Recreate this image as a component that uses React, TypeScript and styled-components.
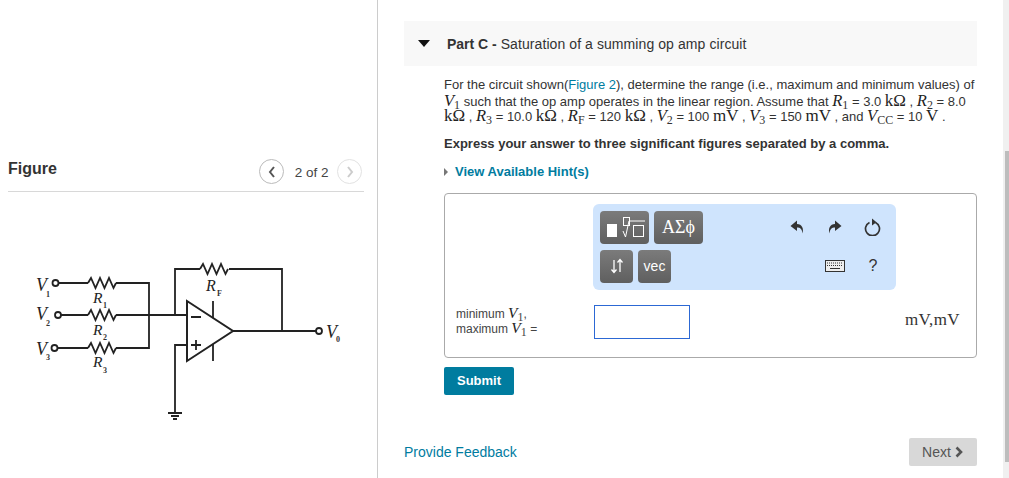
import React from "react";
import styled, { createGlobalStyle } from "styled-components";

const Global = createGlobalStyle`
  html, body { margin: 0; padding: 0; background: #fff; overflow: hidden; }
  body { font-family: "Liberation Sans", Arial, sans-serif; color: #333; }
`;

const Page = styled.div`
  width: 1009px;
  height: 478px;
  display: flex;
  overflow: hidden;
`;

const FigurePanel = styled.section`
  width: 378px;
  height: 478px;
  box-sizing: border-box;
  border-right: 1px solid #ccc;
  padding: 157px 13px 0 8px;
  flex: none;
`;

const FigureHeader = styled.header`
  height: 34px;
  border-bottom: 1px solid #d8d8d8;
  display: flex;
  justify-content: space-between;
  align-items: flex-start;
`;

const FigureTitle = styled.h2`
  margin: 2px 0 0;
  font-size: 16px;
  line-height: 20px;
  font-weight: 700;
  color: #333;
`;

const Pager = styled.div`
  display: flex;
  align-items: center;
  gap: 9.5px;
  margin: 2px 2px 0 0;
  font-size: 13.5px;
  color: #444;
`;

const PageCount = styled.span`
  margin: 2px -1px 0 1px;
`;

const PageButton = styled.span<{ $off?: boolean }>`
  width: 25px;
  height: 25px;
  box-sizing: border-box;
  border-radius: 50%;
  border: 1px solid ${(p) => (p.$off ? "#e2e2e2" : "#bbb")};
  display: flex;
  align-items: center;
  justify-content: center;
`;

const Diagram = styled.svg`
  display: block;
  width: 369px;
  height: 286px;
  margin-left: -8px;
`;

const Main = styled.main`
  flex: 1;
  min-width: 0;
  box-sizing: border-box;
  padding: 21px 32px 0 26px;
  display: flex;
  flex-direction: column;
`;

const PartBar = styled.div`
  height: 45px;
  background: #f8f8f8;
  display: flex;
  align-items: center;
  font-size: 14px;
  letter-spacing: 0.08px;
  color: #333;
`;

const Caret = styled.span`
  width: 0;
  height: 0;
  border-left: 6px solid transparent;
  border-right: 6px solid transparent;
  border-top: 7px solid #111;
  margin: 0 17px 0 14px;
`;

const PartLabel = styled.strong`
  font-weight: 700;
  white-space: pre;
  letter-spacing: 0;
`;

const Body = styled.div`
  padding: 11px 0 0 40px;
  font-size: 13px;
  color: #333;
`;

const AnswerBody = styled.div`
  padding-left: 40px;
  font-size: 13px;
  color: #333;
`;

const Paragraph = styled.p`
  margin: 0;
  width: 540px;
  line-height: 15px;
  white-space: nowrap;
`;

const Line = styled.span`
  display: block;
  height: 15.5px;
`;

const Mi = styled.span`
  font-family: "Liberation Serif", "Times New Roman", serif;
  font-size: 17px;
  color: #222;
`;

const Var = styled(Mi)`
  font-size: 16.5px;
  font-style: italic;
`;

const Sub = styled.span`
  font-family: "Liberation Serif", serif;
  font-size: 12px;
  font-style: normal;
  vertical-align: -3px;
  line-height: 0;
`;

const Link = styled.a`
  color: #007c9f;
`;

const Instruction = styled.p`
  margin: 11px 0 0;
  font-size: 13px;
  line-height: 18px;
  font-weight: 700;
`;

const Hint = styled.div`
  margin-top: 10px;
  height: 18px;
  display: flex;
  align-items: center;
  gap: 7px;
  font-size: 13px;
  font-weight: 700;
  color: #007c9f;
`;

const HintCaret = styled.span`
  width: 0;
  height: 0;
  border-top: 4px solid transparent;
  border-bottom: 4px solid transparent;
  border-left: 4px solid #777;
`;

const AnswerCard = styled.div`
  margin-top: 12px;
  height: 165px;
  box-sizing: border-box;
  border: 1px solid #aaa;
  border-radius: 4px;
  display: flex;
  flex-direction: column;
`;

const Toolbar = styled.div`
  margin: 10px 0 0 148px;
  width: 303px;
  height: 86px;
  box-sizing: border-box;
  background: #cfe4fd;
  border-radius: 6px;
  padding: 7px 14px 7px 7px;
  display: grid;
  grid-template-columns: auto 1fr auto;
  grid-template-rows: 33px 33px;
  row-gap: 6px;
`;

const ToolGroup = styled.div`
  display: flex;
  gap: 5px;
  align-items: flex-start;
`;

const ToolButton = styled.div<{ $w: number }>`
  width: ${(p) => p.$w}px;
  height: 33px;
  border-radius: 4px;
  background: linear-gradient(#7b7b7b, #5f5f5f);
  color: #fff;
  display: flex;
  align-items: center;
  justify-content: center;
  font-size: 14px;
`;

const GreekLabel = styled.span`
  font-family: "Liberation Serif", serif;
  font-size: 18px;
`;

const Actions = styled.div`
  grid-column: 3;
  display: flex;
  align-items: center;
  gap: 20px;
  color: #333;
`;

const SecondActions = styled(Actions)`
  grid-row: 2;
  gap: 21px;
  padding-right: 2px;
  justify-content: flex-end;
`;

const Help = styled.span`
  font-size: 16px;
  color: #333;
  width: 14px;
  text-align: center;
`;

const Row = styled.div`
  margin-top: 15px;
  display: flex;
  align-items: center;
  padding: 0 16px 0 11px;
`;

const InputLabel = styled.div`
  width: 138px;
  font-size: 12px;
  line-height: 15px;
  color: #444;
  margin-top: 1px;
`;

const LabelVar = styled(Var)`
  font-size: 15.5px;
  line-height: 0;
`;

const Answer = styled.div`
  width: 96px;
  height: 34px;
  box-sizing: border-box;
  border: 1px solid #2c68d4;
  background: #fff;
`;

const Units = styled.div`
  margin: -4px 0 0 auto;
  font-family: "Liberation Serif", serif;
  font-size: 17px;
  letter-spacing: 0.4px;
  color: #333;
`;

const Submit = styled.button`
  display: block;
  margin-top: 9px;
  width: 70px;
  height: 28px;
  border: none;
  border-radius: 2px;
  background: #007c9f;
  color: #fff;
  font: 700 13px "Liberation Sans", Arial, sans-serif;
  padding: 0;
`;

const Footer = styled.div`
  margin-top: 43px;
  display: flex;
  align-items: center;
  justify-content: space-between;
  font-size: 14px;
`;

const Next = styled.div`
  width: 68px;
  height: 28px;
  box-sizing: border-box;
  border-radius: 2px;
  background: #d8d8d8;
  color: #555;
  display: flex;
  align-items: center;
  justify-content: center;
  gap: 3px;
`;

const Scrollbar = styled.div`
  width: 6px;
  height: 478px;
  flex: none;
  margin-left: -6px;
  background: #f0f0f0;
  padding: 151px 0 0 2px;
  box-sizing: border-box;
`;

const Thumb = styled.div`
  height: 311px;
  background: #bdbdbd;
`;

const Chevron = ({ d, c, w = 2 }: { d: string; c: string; w?: number }) => (
  <svg width="10" height="14" viewBox="0 0 10 14">
    <path d={d} fill="none" stroke={c} strokeWidth={w} />
  </svg>
);

const zig = (x: number, y: number) =>
  `M${x} ${y}l3 -5l4.5 10l4.5 -10l4.5 10l4.5 -10l4.5 10l2.5 -5`;

const T = ({ x, y, s = 18, b }: { x: number; y: number; s?: number; b: string }) => (
  <text x={x} y={y} fontSize={s} fontFamily="'Liberation Serif', serif" fontStyle="italic" fill="#222">
    {b}
  </text>
);
const Ts = ({ x, y, b }: { x: number; y: number; b: string }) => (
  <text x={x} y={y} fontSize={8} fontFamily="'Liberation Serif', serif" fontWeight="700" fill="#333">
    {b}
  </text>
);

export default function App() {
  return (
    <Page>
      <Global />
      <FigurePanel>
        <FigureHeader>
          <FigureTitle>Figure</FigureTitle>
          <Pager>
            <PageButton>
              <Chevron d="M7 2L3 7l4 5" c="#555" />
            </PageButton>
            <PageCount>2 of 2</PageCount>
            <PageButton $off>
              <Chevron d="M3 2l4 5l-4 5" c="#ccc" />
            </PageButton>
          </Pager>
        </FigureHeader>
        {/* viewBox starts at page coordinates x=0, y=192 */}
        <Diagram viewBox="0 192 369 286">
          <g fill="none" stroke="#222" strokeWidth="1.8">
            <circle cx="55.5" cy="283" r="3" />
            <circle cx="58" cy="315" r="3" />
            <circle cx="54.5" cy="348" r="3" />
            <circle cx="319" cy="331" r="3" />
            <path d="M59 283H88M116 283H149V348H116M88 348H58" />
            <path d="M61 315H88M116 315H187M175 315V269H200M229 269H282V331" />
            <path d="M233 331H316M187 345H175V412" />
            <path d={zig(88, 283)} />
            <path d={zig(88, 315)} />
            <path d={zig(88, 348)} />
            <path d={zig(200, 269)} />
            <path d="M187 301V361L233 331Z" strokeWidth="2" />
            <path d="M213 301V318M213 344V361" />
            <path d="M191 317H201M191 345H201M196 340V350" />
            <path d="M168 413H182M171 416H179M173 419H177" />
          </g>
          <T x={36} y={291} b="V" />
          <Ts x={46} y={297} b="1" />
          <T x={36} y={320} b="V" />
          <Ts x={46} y={326} b="2" />
          <T x={36} y={355} b="V" />
          <Ts x={46} y={360} b="3" />
          <T x={326} y={338} b="V" />
          <Ts x={336} y={342} b="0" />
          <T x={93} y={303} s={15.5} b="R" />
          <Ts x={103} y={308} b="1" />
          <T x={93} y={335} s={15.5} b="R" />
          <Ts x={103} y={340} b="2" />
          <T x={93} y={367} s={15.5} b="R" />
          <Ts x={103} y={373} b="3" />
          <T x={206} y={291} s={16} b="R" />
          <Ts x={217} y={296} b="F" />
        </Diagram>
      </FigurePanel>
      <Main>
        <PartBar>
          <Caret />
          <PartLabel>Part C - </PartLabel>
          Saturation of a summing op amp circuit
        </PartBar>
        <Body>
          <Paragraph>
            <Line>
              For the circuit shown(<Link>Figure 2</Link>), determine the range (i.e., maximum and minimum values) of
            </Line>
            <Line>
              <Var>V</Var>
              <Sub>1</Sub> such that the op amp operates in the linear region. Assume that <Var>R</Var>
              <Sub>1</Sub> = 3.0 <Mi>kΩ</Mi> , <Var>R</Var>
              <Sub>2</Sub> = 8.0
            </Line>
            <Line>
              <Mi>kΩ</Mi> , <Var>R</Var>
              <Sub>3</Sub> = 10.0 <Mi>kΩ</Mi> , <Var>R</Var>
              <Sub>F</Sub> = 120 <Mi>kΩ</Mi> , <Var>V</Var>
              <Sub>2</Sub> = 100 <Mi>mV</Mi> , <Var>V</Var>
              <Sub>3</Sub> = 150 <Mi>mV</Mi> , and <Var>V</Var>
              <Sub>CC</Sub> = 10 <Mi>V</Mi> .
            </Line>
          </Paragraph>
          <Instruction>Express your answer to three significant figures separated by a comma.</Instruction>
          <Hint>
            <HintCaret />
            View Available Hint(s)
          </Hint>
        </Body>
        <AnswerBody>
          <AnswerCard>
            <Toolbar>
              <ToolGroup>
                <ToolButton $w={49}>
                  <svg width="49" height="33" viewBox="0 0 49 33">
                    <rect x="7" y="13" width="10" height="13" fill="#fff" />
                    <rect x="23.5" y="6.5" width="6" height="8" fill="none" stroke="#fff" />
                    <path d="M23 20l2.5 6l3.5 -16h16" fill="none" stroke="#fff" />
                    <rect x="33.5" y="14.5" width="10" height="11" fill="none" stroke="#fff" />
                  </svg>
                </ToolButton>
                <ToolButton $w={49}>
                  <GreekLabel>ΑΣϕ</GreekLabel>
                </ToolButton>
              </ToolGroup>
              <Actions>
                <svg width="18" height="18" viewBox="0 0 18 18">
                  <path d="M9 2.5L2.5 8L9 13V9.5C12 9.5 14 10.5 14.5 15.5C16 10.5 14 6 9 6Z" fill="#333" />
                </svg>
                <svg width="18" height="18" viewBox="0 0 18 18">
                  <path d="M9 2.5L15.5 8L9 13V9.5C6 9.5 4 10.5 3.5 15.5C2 10.5 4 6 9 6Z" fill="#333" />
                </svg>
                <svg width="18" height="18" viewBox="0 0 18 18">
                  <path d="M11.5 4.4A7 7 0 1 1 5.5 4.4" fill="none" stroke="#333" strokeWidth="1.7" />
                  <path d="M8 0.5L12.5 4.3L8 7.5Z" fill="#333" />
                </svg>
              </Actions>
              <ToolGroup>
                <ToolButton $w={33}>
                  <svg width="16" height="16" viewBox="0 0 16 16">
                    <path d="M5 2V14M2.5 11.5L5 14.5L7.5 11.5M11 14V2M8.5 4.5L11 1.5L13.5 4.5" fill="none" stroke="#fff" strokeWidth="1.3" />
                  </svg>
                </ToolButton>
                <ToolButton $w={33}>vec</ToolButton>
              </ToolGroup>
              <SecondActions>
                <svg width="20" height="12" viewBox="0 0 20 12">
                  <rect x="0.5" y="0.5" width="19" height="11" fill="#eee" stroke="#333" />
                  <path d="M2 3H18M2 5.5H18" stroke="#333" strokeDasharray="1 1" />
                  <path d="M5 8.5H15" stroke="#333" />
                </svg>
                <Help>?</Help>
              </SecondActions>
            </Toolbar>
            <Row>
              <InputLabel>
                minimum <LabelVar>V</LabelVar>
                <Sub>1</Sub>,
                <br />
                maximum <LabelVar>V</LabelVar>
                <Sub>1</Sub> =
              </InputLabel>
              <Answer />
              <Units>mV,mV</Units>
            </Row>
          </AnswerCard>
          <Submit>Submit</Submit>
        </AnswerBody>
        <Footer>
          <Link>Provide Feedback</Link>
          <Next>
            Next
            <Chevron d="M2.5 2.5L7 7l-4.5 4.5" c="#555" w={2.6} />
          </Next>
        </Footer>
      </Main>
      <Scrollbar>
        <Thumb />
      </Scrollbar>
    </Page>
  );
}
